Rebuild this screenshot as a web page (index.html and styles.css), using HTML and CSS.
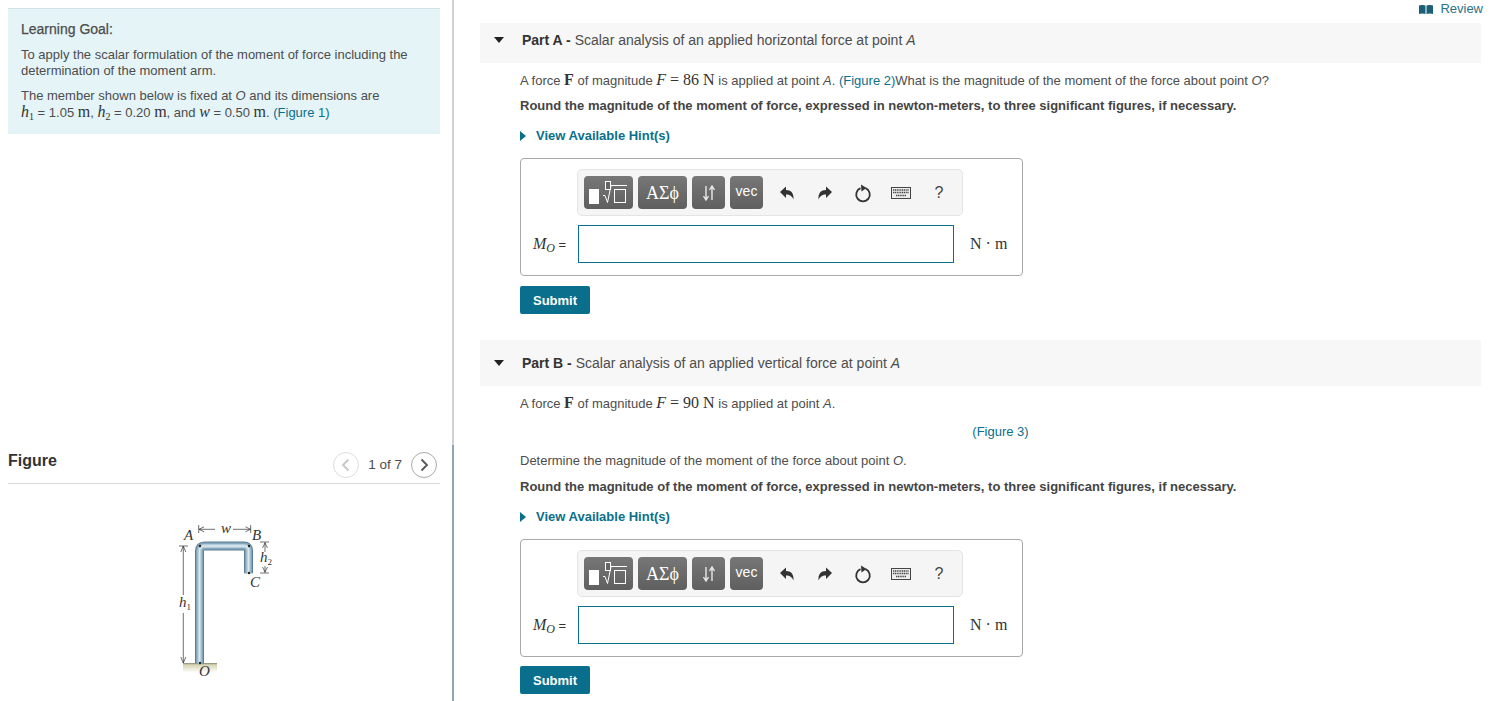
FILE: index.html
```html
<!DOCTYPE html>
<html lang="en">
<head>
<meta charset="utf-8">
<title>Part A and Part B</title>
<link rel="stylesheet" href="styles.css">
</head>
<body>
<div class="page">
  <aside class="left">
    <section class="goal">
      <h3 class="goal-title">Learning Goal:</h3>
      <p class="goal-p">To apply the scalar formulation of the moment of force including the determination of the moment arm.</p>
      <p class="goal-p goal-last">The member shown below is fixed at <i>O</i> and its dimensions are<br><span class="m"><i>h</i><sub>1</sub></span> = 1.05 <span class="m">m</span>, <span class="m"><i>h</i><sub>2</sub></span> = 0.20 <span class="m">m</span>, and <span class="m"><i>w</i></span> = 0.50 <span class="m">m</span>. <a class="link">(Figure 1)</a></p>
    </section>
    <div class="fig-head">
      <h2 class="fig-title">Figure</h2>
      <div class="pager">
        <span class="pg-btn pg-off"><svg viewBox="0 0 26 26" width="26" height="26"><path d="M15.500 7.500 10 13l5.500 5.500" fill="none" stroke="#c9c9c9" stroke-width="2"/></svg></span>
        <span class="pg-text">1 of 7</span>
        <span class="pg-btn pg-on"><svg viewBox="0 0 26 26" width="26" height="26"><path d="M10.500 7.500 16 13l-5.500 5.500" fill="none" stroke="#555" stroke-width="1.800"/></svg></span>
      </div>
    </div>
    <div class="fig-wrap">
      <svg class="fig" viewBox="0 0 140 180" width="140" height="180">
        <defs>
          <linearGradient id="ground" x1="0" x2="0" y1="0" y2="1"><stop offset="0" stop-color="#cfcda6"/><stop offset="1" stop-color="#fff"/></linearGradient>
        </defs>
        <rect x="33" y="153.500" width="34" height="9" fill="url(#ground)"/>
        <path d="M33 153.700H67" stroke="#8c8a6a" stroke-width="1"/>
        <g fill="none">
          <path d="M49.500 153.500V41q0-5 5-5H94q4.500 0 4.500 4.500V63.300" stroke="#5a7c94" stroke-width="9"/>
          <path d="M49.500 153.500V41q0-5 5-5H94q4.500 0 4.500 4.500V63.300" stroke="#86a7bb" stroke-width="7"/>
          <path d="M49.500 153.500V41q0-5 5-5H94q4.500 0 4.500 4.500V63.300" stroke="#b3ccd9" stroke-width="4"/>
          <path d="M49.500 153.500V41q0-5 5-5H94q4.500 0 4.500 4.500V63.300" stroke="#dbe8ee" stroke-width="1.500"/>
        </g>
        <circle cx="50" cy="36" r="1.200" fill="#222"/><circle cx="99" cy="36" r="1.200" fill="#222"/><circle cx="99" cy="63" r="1.200" fill="#222"/><circle cx="50" cy="153" r="1.200" fill="#222"/>
        <g fill="none" stroke="#333" stroke-width=".7">
          <path d="M48.700 15v8M100.700 15v8M49 19.300H65M83 19.300h17.500M49 19.300l5-2.500M49 19.300l5 2.500M100.500 19.300l-5-2.500M100.500 19.300l-5 2.500"/>
          <path d="M29 36H38M33.300 36V85M33.300 103V153M33.300 36l-2.500 6M33.300 36l2.500 6M33.300 153l-2.500-6M33.300 153l2.500-6"/>
          <path d="M110 32h9M110 63h9M115 32v10M115 56v7M115 33l-2.500 5M115 33l2.500 5M115 62l-2.500-5M115 62l2.500-5"/>
        </g>
        <g class="fig-label">
          <text x="34" y="30">A</text>
          <text x="102" y="30">B</text>
          <text x="100" y="77">C</text>
          <text x="49" y="166">O</text>
          <text x="71" y="23">w</text>
          <text x="29" y="97">h<tspan class="fig-sub" dy="3">1</tspan></text>
          <text x="110" y="52">h<tspan class="fig-sub" dy="3">2</tspan></text>
        </g>
      </svg>
    </div>
  </aside>
  <main class="right">
    <div class="review"><svg class="review-icon" viewBox="0 0 14 9" width="14" height="9"><path d="M0 .5c2-.7 4.500-.7 6.500 0V9c-2-.7-4.500-.7-6.500 0zM7.500 .5c2-.7 4.500-.7 6.500 0V9c-2-.7-4.500-.7-6.500 0z" fill="#1c5f78"/></svg><a class="review-link">Review</a></div>

    <section class="part part-a">
      <header class="part-head part-head-a"><span class="caret-down"></span><span class="part-title"><b>Part A -</b> Scalar analysis of an applied horizontal force at point <i>A</i></span></header>
      <div class="part-body">
        <p class="line line-first">A force <b class="m">F</b> of magnitude <span class="m"><i>F</i><span class="eq">=</span>86 N</span> is applied at point <i>A</i>. <a class="link">(Figure 2)</a>What is the magnitude of the moment of the force about point <i>O</i>?</p>
        <p class="line line-bold">Round the magnitude of the moment of force, expressed in newton-meters, to three significant figures, if necessary.</p>
        <p class="hints"><span class="caret-right"></span>View Available Hint(s)</p>
        <div class="answer">
          <div class="toolbar">
            <span class="tb tb-tmpl"><span class="white-sq"></span><svg viewBox="0 0 26 24" width="26" height="24"><path d="M1 14.500h2l2.500 7L9 4.500h16" fill="none" stroke="#fff" stroke-width="1"/><rect x="3.500" y=".5" width="5" height="8" fill="#666" stroke="#fff" stroke-width="1"/><rect x="12.500" y="8.500" width="11" height="13" fill="none" stroke="#fff" stroke-width="1"/></svg></span>
            <span class="tb tb-greek">ΑΣϕ</span>
            <span class="tb tb-arrows"><svg viewBox="0 0 14 16" width="14" height="16"><path d="M4 1v13M1.500 11 4 15l2.500-4M10 15V2M7.500 5 10 1l2.500 4" fill="none" stroke="#e8e8e8" stroke-width="1.400"/></svg></span>
            <span class="tb tb-vec">vec</span>
            <span class="tool tool-undo"><svg viewBox="0 0 16 16" width="16" height="16"><path d="M1 7 7 1.500V5c5 0 8 3 7.500 9.500C13 11 11 9.500 7 9.500V13z" fill="#333"/></svg></span>
            <span class="tool tool-redo"><svg viewBox="0 0 16 16" width="16" height="16"><path d="M15 7 9 1.500V5c-5 0-8 3-7.500 9.500C3 11 5 9.500 9 9.500V13z" fill="#333"/></svg></span>
            <span class="tool tool-reset"><svg viewBox="0 0 18 20" width="18" height="20"><path d="M11.500 5.200a6.800 6.800 0 1 1-5 0" fill="none" stroke="#333" stroke-width="1.800"/><path d="M7 1.500 12.500 5 7.500 8.500z" fill="#333"/></svg></span>
            <span class="tool tool-kbd"><svg viewBox="0 0 20 12" width="20" height="12"><rect x=".5" y=".5" width="19" height="11" fill="#eee" stroke="#444"/><path d="M2 3h16M2 5.500h16M5 8.500h10" stroke="#444" stroke-width="1.300" stroke-dasharray="1.200 .6"/></svg></span>
            <span class="tool tool-help">?</span>
          </div>
          <div class="answer-row">
            <span class="ans-label"><span class="m"><i>M<sub>O</sub></i></span> =</span>
            <input class="ans-input" type="text" aria-label="M O">
            <span class="ans-unit">N <span class="dot">·</span> m</span>
          </div>
        </div>
        <button class="submit">Submit</button>
      </div>
    </section>

    <section class="part part-b">
      <header class="part-head part-head-b"><span class="caret-down"></span><span class="part-title"><b>Part B -</b> Scalar analysis of an applied vertical force at point <i>A</i></span></header>
      <div class="part-body">
        <p class="line line-first">A force <b class="m">F</b> of magnitude <span class="m"><i>F</i><span class="eq">=</span>90 N</span> is applied at point <i>A</i>.</p>
        <p class="line line-center"><a class="link">(Figure 3)</a></p>
        <p class="line line-det">Determine the magnitude of the moment of the force about point <i>O</i>.</p>
        <p class="line line-bold">Round the magnitude of the moment of force, expressed in newton-meters, to three significant figures, if necessary.</p>
        <p class="hints"><span class="caret-right"></span>View Available Hint(s)</p>
        <div class="answer">
          <div class="toolbar">
            <span class="tb tb-tmpl"><span class="white-sq"></span><svg viewBox="0 0 26 24" width="26" height="24"><path d="M1 14.500h2l2.500 7L9 4.500h16" fill="none" stroke="#fff" stroke-width="1"/><rect x="3.500" y=".5" width="5" height="8" fill="#666" stroke="#fff" stroke-width="1"/><rect x="12.500" y="8.500" width="11" height="13" fill="none" stroke="#fff" stroke-width="1"/></svg></span>
            <span class="tb tb-greek">ΑΣϕ</span>
            <span class="tb tb-arrows"><svg viewBox="0 0 14 16" width="14" height="16"><path d="M4 1v13M1.500 11 4 15l2.500-4M10 15V2M7.500 5 10 1l2.500 4" fill="none" stroke="#e8e8e8" stroke-width="1.400"/></svg></span>
            <span class="tb tb-vec">vec</span>
            <span class="tool tool-undo"><svg viewBox="0 0 16 16" width="16" height="16"><path d="M1 7 7 1.500V5c5 0 8 3 7.500 9.500C13 11 11 9.500 7 9.500V13z" fill="#333"/></svg></span>
            <span class="tool tool-redo"><svg viewBox="0 0 16 16" width="16" height="16"><path d="M15 7 9 1.500V5c-5 0-8 3-7.500 9.500C3 11 5 9.500 9 9.500V13z" fill="#333"/></svg></span>
            <span class="tool tool-reset"><svg viewBox="0 0 18 20" width="18" height="20"><path d="M11.500 5.200a6.800 6.800 0 1 1-5 0" fill="none" stroke="#333" stroke-width="1.800"/><path d="M7 1.500 12.500 5 7.500 8.500z" fill="#333"/></svg></span>
            <span class="tool tool-kbd"><svg viewBox="0 0 20 12" width="20" height="12"><rect x=".5" y=".5" width="19" height="11" fill="#eee" stroke="#444"/><path d="M2 3h16M2 5.500h16M5 8.500h10" stroke="#444" stroke-width="1.300" stroke-dasharray="1.200 .6"/></svg></span>
            <span class="tool tool-help">?</span>
          </div>
          <div class="answer-row">
            <span class="ans-label"><span class="m"><i>M<sub>O</sub></i></span> =</span>
            <input class="ans-input" type="text" aria-label="M O">
            <span class="ans-unit">N <span class="dot">·</span> m</span>
          </div>
        </div>
        <button class="submit">Submit</button>
      </div>
    </section>
  </main>
</div>
</body>
</html>
```
FILE: styles.css
```css
* { box-sizing: border-box; }
html, body { margin: 0; height: 701px; overflow: hidden; background: #fff; }
body { font-family: "Liberation Sans", Arial, sans-serif; font-size: 13px; line-height: 16px; color: #4d4d4d; }
p, h2, h3 { margin: 0; }
sub { font-size: 10px; line-height: 0; vertical-align: -3px; }
.m { font-family: "Liberation Serif", "Times New Roman", serif; font-size: 16px; color: #333; }
.eq { margin: 0 4px; }
.link { color: #0a6f8c; }

.page { display: flex; height: 701px; }
.left { position: relative; width: 454px; flex: none; padding: 8px 12px 0 8px; border-right: 2px solid #cfd2d4; }
.left::after { content: ""; position: absolute; top: 445px; bottom: 0; right: -2px; width: 2px; background: #8fa5b5; }

.goal { background: #e4f4f7; border-top: 1px solid #cfe3e8; padding: 12px 13px 13px; height: 126px; }
.goal-title { font-size: 14px; font-weight: normal; -webkit-text-stroke: .25px #4a4a4a; }
.goal-p { margin-top: 10px; }
.goal-last { margin-top: 9px; }

.fig-head { display: flex; align-items: center; justify-content: space-between; margin-top: 311px; height: 39px; border-bottom: 1px solid #d9d9d9; }
.fig-title { font-size: 16px; font-weight: bold; color: #333; margin-top: -7px; }
.pager { display: flex; align-items: center; gap: 9px; margin-right: 3px; margin-top: 1px; }
.pg-text { font-size: 13.500px; }
.pg-btn { width: 26px; height: 26px; border-radius: 50%; display: block; border: 1px solid #ddd; }
.pg-btn svg { display: block; margin: -1px; }
.pg-on { border-color: #aaa; }

.fig-wrap { padding-left: 142px; margin-top: 26px; }
.fig { display: block; }
.fig-label { font-family: "Liberation Serif", serif; font-style: italic; font-size: 15px; fill: #333; }
.fig-sub { font-size: 9px; font-style: normal; }

.right { flex: 1; padding: 0 20px 0 26px; min-width: 0; }
.review { height: 23px; display: flex; justify-content: flex-end; align-items: center; gap: 7px; margin-right: -2px; padding-bottom: 5px; }
.review-link { color: #2a7189; }

.part-head { display: flex; align-items: center; background: #f7f7f7; }
.part-head-a { height: 40px; padding-bottom: 6px; }
.part-head-b { height: 46px; }
.part-b { margin-top: 26px; }
.caret-down { width: 0; height: 0; margin-left: 14px; margin-right: 18px; border-left: 5.500px solid transparent; border-right: 5.500px solid transparent; border-top: 6px solid #222; }
.part-title { color: #4d4d4d; font-size: 14px; }
.part-title b { color: #333; }

.part-body { padding-left: 40px; }
.line-first { margin-top: 9px; height: 16px; }
.line-bold { margin-top: 10px; font-weight: bold; color: #444; }
.line-center { text-align: center; margin-top: 13px; }
.line-det { margin-top: 13px; }
.hints { margin-top: 14px; font-weight: bold; color: #0a6f8c; display: flex; align-items: center; }
.caret-right { width: 0; height: 0; margin-right: 10px; border-top: 5px solid transparent; border-bottom: 5px solid transparent; border-left: 6px solid #0a6f8c; }

.answer { width: 503px; height: 118px; margin-top: 14px; border: 1px solid #a9a9a9; border-radius: 4px; padding-top: 10px; }
.toolbar { display: flex; align-items: center; width: 386px; height: 47px; margin-left: 56px; padding-left: 6px; border: 1px solid #e4e4e4; border-radius: 5px; background: #f5f5f5; }
.tb { height: 33px; border-radius: 4px; background: linear-gradient(#777, #5f5f5f); color: #fff; display: flex; align-items: center; justify-content: center; margin-right: 5px; flex: none; }
.tb-tmpl { width: 49px; gap: 3px; }
.white-sq { width: 10px; height: 15px; background: #fff; margin-top: 7px; }
.tb-greek { width: 49px; font-family: "Liberation Serif", serif; font-size: 18px; }
.tb-arrows { width: 33px; }
.tb-vec { width: 33px; font-size: 14px; margin-right: 0; padding-bottom: 3px; }
.tool { display: flex; align-items: center; justify-content: center; width: 38px; flex: none; }
.tool-undo { margin-left: 5px; }
.tool-help { font-size: 16px; color: #444; }
.answer-row { display: flex; align-items: center; margin-top: 9px; height: 38px; }
.ans-label { width: 57px; padding-left: 12px; white-space: nowrap; color: #333; }
.ans-label sub { font-size: 12px; }
.ans-input { width: 376px; height: 38px; border: 1px solid #0a6f8c; background: #fff; padding: 0; margin: 0; outline: none; flex: none; }
.ans-unit { margin-left: 16px; font-family: "Liberation Serif", serif; font-size: 16px; color: #333; }
.submit { display: block; width: 70px; height: 28px; margin-top: 10px; border: 0; border-radius: 2px; background: #0a6f8c; color: #fff; font-family: "Liberation Sans", Arial, sans-serif; font-size: 13px; font-weight: bold; padding: 0; }
.part-b .submit { margin-top: 9px; }
```
